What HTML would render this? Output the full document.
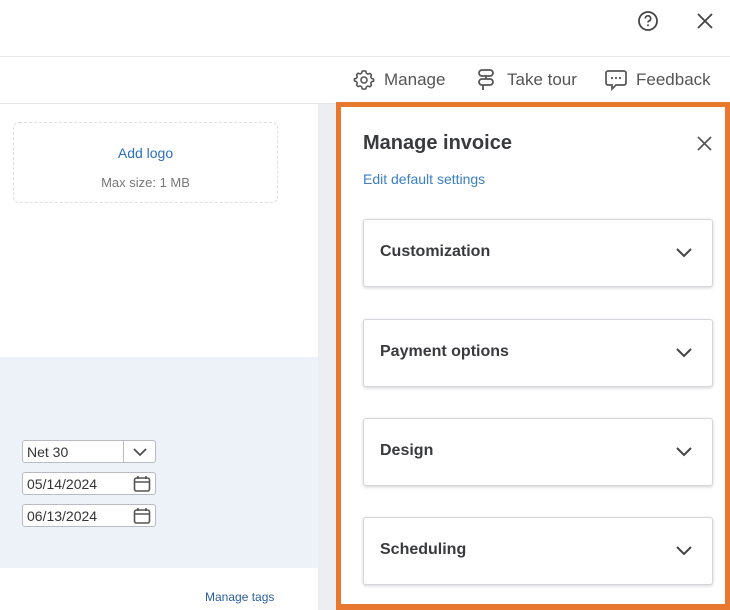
<!DOCTYPE html>
<html><head><style>
*{margin:0;padding:0;box-sizing:border-box}
body{width:730px;height:610px;overflow:hidden;background:#fff;font-family:"Liberation Sans",sans-serif;position:relative;color:#393a3d}
.a{position:absolute}
.card{position:absolute;left:363px;width:350px;height:68px;border:1px solid #d4d7dc;border-radius:3px;box-shadow:0 1px 3px rgba(0,0,0,.18);background:#fff}
.card span{position:absolute;left:16px;top:23px;font-size:16px;font-weight:bold;color:#393a3d}
.card svg{position:absolute;right:20px;top:28px}
.inp{position:absolute;left:22px;width:134px;height:23px;border:1px solid #b8bcc2;border-radius:3px;background:#fff;font-size:14px;padding:3px 0 0 4px;color:#333}
</style></head><body>
<div class="a" style="left:0;top:56px;width:730px;height:1px;background:#e8e9eb"></div>
<svg class="a" style="left:637px;top:10px" width="22" height="22" viewBox="0 0 22 22"><circle cx="11" cy="11" r="9" fill="none" stroke="#444" stroke-width="1.8"/><path d="M8.3 8.5a2.7 2.7 0 1 1 3.5 2.6c-.6.3-.8.7-.8 1.4" fill="none" stroke="#444" stroke-width="1.7"/><circle cx="11" cy="15.3" r="1" fill="#444"/></svg>
<svg class="a" style="left:696px;top:12px" width="18" height="18" viewBox="0 0 18 18"><path d="M2 2L16 16M16 2L2 16" stroke="#444" stroke-width="1.8"/></svg>
<svg class="a" style="left:353px;top:69px" width="22" height="22" viewBox="0 0 24 24"><path d="M12 2l2 .3.6 2.4 1.6.9 2.3-.8 1.6 1.5-.7 2.4.8 1.6 2.3.7v2.2l-2.3.7-.8 1.6.7 2.4-1.6 1.5-2.3-.8-1.6.9L14 21.7l-2 .3-2-.3-.6-2.4-1.6-.9-2.3.8-1.6-1.5.7-2.4-.8-1.6L1.5 13v-2.2l2.3-.7.8-1.6-.7-2.4 1.6-1.5 2.3.8 1.6-.9L10 2.3z" fill="none" stroke="#555" stroke-width="1.7" stroke-linejoin="round"/><circle cx="12" cy="12" r="3.3" fill="none" stroke="#555" stroke-width="1.7"/></svg>
<div class="a" style="left:384px;top:70px;font-size:17px;color:#555">Manage</div>
<svg class="a" style="left:476px;top:68px" width="20" height="24" viewBox="0 0 20 24"><rect x="3" y="2" width="14" height="6" rx="3" fill="none" stroke="#555" stroke-width="1.8"/><rect x="3" y="11" width="14" height="6" rx="3" fill="none" stroke="#555" stroke-width="1.8"/><path d="M10 8v3M7 17v5" stroke="#555" stroke-width="1.8"/></svg>
<div class="a" style="left:507px;top:70px;font-size:17px;color:#555">Take tour</div>
<svg class="a" style="left:605px;top:68px" width="22" height="24" viewBox="0 0 22 24"><path d="M3 3h16a2 2 0 0 1 2 2v10a2 2 0 0 1-2 2h-8l-4 4v-4H3a2 2 0 0 1-2-2V5a2 2 0 0 1 2-2z" fill="none" stroke="#555" stroke-width="1.7"/><circle cx="7" cy="10" r="1.1" fill="#555"/><circle cx="11" cy="10" r="1.1" fill="#555"/><circle cx="15" cy="10" r="1.1" fill="#555"/></svg>
<div class="a" style="left:636px;top:70px;font-size:17px;color:#555">Feedback</div>
<div class="a" style="left:0;top:103px;width:336px;height:1px;background:#e3e5e8"></div>
<div class="a" style="left:13px;top:122px;width:265px;height:81px;border:1px dashed #dcdfe3;border-radius:6px"></div>
<div class="a" style="left:13px;top:145px;width:265px;text-align:center;font-size:14px;color:#2a6fbf">Add logo</div>
<div class="a" style="left:13px;top:175px;width:265px;text-align:center;font-size:13px;color:#777">Max size: 1 MB</div>
<div class="a" style="left:0;top:357px;width:318px;height:211px;background:#edf2f8"></div>
<div class="inp" style="top:440px">Net 30<div class="a" style="left:100px;top:0;width:1px;height:21px;background:#b8bcc2"></div><svg class="a" style="left:110px;top:7px" width="14" height="9" viewBox="0 0 14 9"><path d="M1 1l6 6 6-6" fill="none" stroke="#444" stroke-width="1.6"/></svg></div>
<div class="inp" style="top:472px">05/14/2024<svg class="a" style="left:110px;top:2px" width="18" height="18" viewBox="0 0 18 18"><rect x="1.5" y="3" width="15" height="13" rx="2" fill="none" stroke="#555" stroke-width="1.6"/><path d="M1.5 7h15M5 1v3M13 1v3" stroke="#555" stroke-width="1.6"/></svg></div>
<div class="inp" style="top:504px">06/13/2024<svg class="a" style="left:110px;top:2px" width="18" height="18" viewBox="0 0 18 18"><rect x="1.5" y="3" width="15" height="13" rx="2" fill="none" stroke="#555" stroke-width="1.6"/><path d="M1.5 7h15M5 1v3M13 1v3" stroke="#555" stroke-width="1.6"/></svg></div>
<div class="a" style="left:205px;top:590px;font-size:12px;color:#2a5f9e">Manage tags</div>
<div class="a" style="left:318px;top:104px;width:18px;height:506px;background:#eceef1"></div>
<div class="a" style="left:336px;top:102px;width:394px;height:508px;border:5px solid #e8782f;border-bottom-width:6px"></div>
<div class="a" style="left:363px;top:132px;font-size:20px;font-weight:bold;color:#393a3d">Manage invoice</div>
<svg class="a" style="left:697px;top:136px" width="15" height="15" viewBox="0 0 15 15"><path d="M1 1L14 14M14 1L1 14" stroke="#555" stroke-width="1.7"/></svg>
<div class="a" style="left:363px;top:171px;font-size:14px;color:#3d7fc4">Edit default settings</div>
<div class="card" style="top:219px"><span>Customization</span><svg width="16" height="10" viewBox="0 0 16 10"><path d="M1 1l7 7 7-7" fill="none" stroke="#444" stroke-width="2"/></svg></div>
<div class="card" style="top:319px"><span>Payment options</span><svg width="16" height="10" viewBox="0 0 16 10"><path d="M1 1l7 7 7-7" fill="none" stroke="#444" stroke-width="2"/></svg></div>
<div class="card" style="top:418px"><span>Design</span><svg width="16" height="10" viewBox="0 0 16 10"><path d="M1 1l7 7 7-7" fill="none" stroke="#444" stroke-width="2"/></svg></div>
<div class="card" style="top:517px"><span>Scheduling</span><svg width="16" height="10" viewBox="0 0 16 10"><path d="M1 1l7 7 7-7" fill="none" stroke="#444" stroke-width="2"/></svg></div>
</body></html>
